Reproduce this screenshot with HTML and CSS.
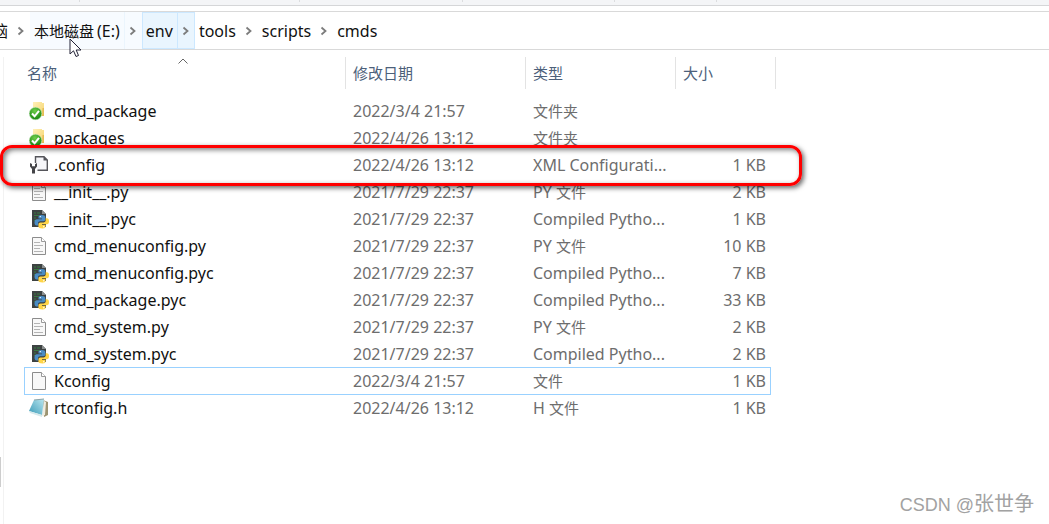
FILE: index.html
```html
<!DOCTYPE html>
<html lang="zh-CN">
<head>
    <meta charset="UTF-8">
    <meta name="viewport" content="width=device-width, initial-scale=1.0">
    <title>cmds</title>
    <link rel="stylesheet" href="styles.css">
</head>
<body>
    <svg class="sprite" aria-hidden="true">
        <defs>
            <linearGradient id="folder-fill" x1="0" y1="0" x2="1" y2="1">
                <stop offset="0" stop-color="#fff0b8"/>
                <stop offset="1" stop-color="#f5d36b"/>
            </linearGradient>
            <radialGradient id="check-fill" cx="0.45" cy="0.3" r="0.7">
                <stop offset="0" stop-color="#6fce4c"/>
                <stop offset="1" stop-color="#16850f"/>
            </radialGradient>
            <linearGradient id="note-fill" x1="0" y1="1" x2="1" y2="0">
                <stop offset="0" stop-color="#3b9bb8"/>
                <stop offset="1" stop-color="#b9e6ef"/>
            </linearGradient>
        </defs>
        <symbol id="chevron" viewBox="0 0 8 10">
            <path d="M1.5 1.5L5.5 5L1.5 8.5" fill="none" stroke="#7c7c7c" stroke-width="1.8"/>
        </symbol>
        <symbol id="folder" viewBox="0 0 20 20">
            <path d="M4 1h9v1h2v6l-1 1v6H4z" fill="url(#folder-fill)"/>
            <path d="M13.500 7H15v8h-2z" fill="#e5bd56"/>
            <circle cx="6.500" cy="12.500" r="6.300" fill="url(#check-fill)" stroke="#cfe8c8" stroke-width="0.5"/>
            <path d="M3 12.500l2.600 2.800L10 9.800" fill="none" stroke="#fff" stroke-width="2"/>
        </symbol>
        <symbol id="config" viewBox="0 0 20 20">
            <path d="M6.500 8V1.700h8.500L18.300 5v10.300H8.500" fill="#f5f5f8" stroke="#55555a" stroke-width="1.400"/>
            <path d="M14.500 1.500V5.500h4z" fill="#55555a"/>
            <path d="M1 8v3.500L3 14v4.500h3V14l2-2.500V8L6 9.200v2H3V9z" fill="#444448"/>
        </symbol>
        <symbol id="page" viewBox="0 0 20 20">
            <path d="M3.500 1.500h9l4 4v13h-13z" fill="#f8f8f8" stroke="#8c8c8c"/>
            <path d="M12.500 1.500v4h4" fill="#fff" stroke="#9a9a9a"/>
        </symbol>
        <symbol id="text" viewBox="0 0 20 20">
            <path d="M3.500 1.500h9l4 4v13h-13z" fill="#f8f8f8" stroke="#8c8c8c"/>
            <path d="M12.500 1.500v4h4" fill="#fff" stroke="#9a9a9a"/>
            <path d="M5 6.500h6M5 9.500h9M5 12.500h6M5 15.500h9" stroke="#b4b4b4"/>
        </symbol>
        <symbol id="python" viewBox="0 0 20 20">
            <path d="M3 1h10l4 4v13H3z" fill="#3d4242"/>
            <path d="M13 1v4h4z" fill="#8b8f8f"/>
            <path d="M5 4h2M8 4h3M5 6.500h5M5 9h2M5 11.500h1" stroke="#397a42"/>
            <path d="M12.500 6c-2.500 0-3 .8-3 2v1.500h3.500v.7H8c-1.500 0-2.500 1-2.500 3.200 0 2 .8 3 2.200 3h1.300v-2c0-1.300 1-2.200 2.300-2.200h3c1.200 0 2-.8 2-2V8c0-1.300-1-2-3.800-2z" fill="#4a8cc4"/>
            <path d="M13.500 19.500c2.500 0 3-.8 3-2V16H13v-.7h5c1.300 0 2-.8 2-3s-.8-3-2-3h-1.300v2c0 1.300-1 2.200-2.300 2.200h-3c-1.200 0-2 .8-2 2v2c0 1.300 1.300 2 4.100 2z" fill="#ffd548"/>
            <circle cx="11.300" cy="7.600" r="0.700" fill="#fff"/>
            <circle cx="14.800" cy="17.800" r="0.700" fill="#fff"/>
        </symbol>
        <symbol id="header-file" viewBox="0 0 20 20">
            <path d="M14 2l5 2v13l-4 2z" fill="#9c9371"/>
            <path d="M15 3l2 1-1 13-3 1z" fill="#efece0"/>
            <path d="M5 2l10-1-2 16L0 13z" fill="url(#note-fill)"/>
            <path d="M0 13l13 4v2L1 15z" fill="#d6e9ec"/>
            <path d="M5 2l10-1" stroke="#8ba3a8"/>
        </symbol>
    </svg>
    <div class="toolbar">
        <div class="group group-1"></div>
        <div class="group group-2"></div>
        <div class="group group-3"></div>
        <div class="group group-4"></div>
        <div class="group group-5"></div>
    </div>
    <nav class="address-bar" aria-label="地址">
        <div class="crumb crumb-cut">
            <a href="#">脑</a>
            <button type="button" aria-label="展开"><svg><use href="#chevron"/></svg></button>
        </div>
        <div class="crumb hovered">
            <a href="#"><span class="cjk">本地磁盘</span> (E:)</a>
            <button type="button" aria-label="展开"><svg><use href="#chevron"/></svg></button>
        </div>
        <div class="crumb active">
            <a href="#">env</a>
            <button type="button" aria-label="展开"><svg><use href="#chevron"/></svg></button>
        </div>
        <div class="crumb">
            <a href="#">tools</a>
            <button type="button" aria-label="展开"><svg><use href="#chevron"/></svg></button>
        </div>
        <div class="crumb">
            <a href="#">scripts</a>
            <button type="button" aria-label="展开"><svg><use href="#chevron"/></svg></button>
        </div>
        <div class="crumb">
            <a href="#">cmds</a>
        </div>
        <svg class="cursor" viewBox="0 0 14 20"><path d="M1 1v15l3.500-3.200L7 18.500l2.500-1L7.200 12H12z" fill="#fff" stroke="#222236"/></svg>
    </nav>
    <main class="content">
        <div class="nav-pane"></div>
        <div class="file-pane">
            <table class="file-list">
                <colgroup>
                    <col class="col-name">
                    <col class="col-date">
                    <col class="col-type">
                    <col class="col-size">
                </colgroup>
                <thead>
                    <tr>
                        <th><button type="button">名称</button><svg class="sort-icon" viewBox="0 0 10 6"><path d="M0.500 5.500L5 1l4.500 4.500" fill="none" stroke="#666"/></svg></th>
                        <th><button type="button">修改日期</button></th>
                        <th><button type="button">类型</button></th>
                        <th><button type="button">大小</button></th>
                    </tr>
                </thead>
                <tbody>
                    <tr>
                        <td class="name"><svg><use href="#folder"/></svg>cmd_package</td>
                        <td>2022/3/4 21:57</td>
                        <td><span class="cjk">文件夹</span></td>
                        <td class="size"></td>
                    </tr>
                    <tr>
                        <td class="name"><svg><use href="#folder"/></svg>packages</td>
                        <td>2022/4/26 13:12</td>
                        <td><span class="cjk">文件夹</span></td>
                        <td class="size"></td>
                    </tr>
                    <tr class="marked">
                        <td class="name"><svg><use href="#config"/></svg>.config</td>
                        <td>2022/4/26 13:12</td>
                        <td>XML Configurati...</td>
                        <td class="size">1 KB</td>
                    </tr>
                    <tr>
                        <td class="name"><svg><use href="#text"/></svg>__init__.py</td>
                        <td>2021/7/29 22:37</td>
                        <td>PY <span class="cjk">文件</span></td>
                        <td class="size">2 KB</td>
                    </tr>
                    <tr>
                        <td class="name"><svg><use href="#python"/></svg>__init__.pyc</td>
                        <td>2021/7/29 22:37</td>
                        <td>Compiled Pytho...</td>
                        <td class="size">1 KB</td>
                    </tr>
                    <tr>
                        <td class="name"><svg><use href="#text"/></svg>cmd_menuconfig.py</td>
                        <td>2021/7/29 22:37</td>
                        <td>PY <span class="cjk">文件</span></td>
                        <td class="size">10 KB</td>
                    </tr>
                    <tr>
                        <td class="name"><svg><use href="#python"/></svg>cmd_menuconfig.pyc</td>
                        <td>2021/7/29 22:37</td>
                        <td>Compiled Pytho...</td>
                        <td class="size">7 KB</td>
                    </tr>
                    <tr>
                        <td class="name"><svg><use href="#python"/></svg>cmd_package.pyc</td>
                        <td>2021/7/29 22:37</td>
                        <td>Compiled Pytho...</td>
                        <td class="size">33 KB</td>
                    </tr>
                    <tr>
                        <td class="name"><svg><use href="#text"/></svg>cmd_system.py</td>
                        <td>2021/7/29 22:37</td>
                        <td>PY <span class="cjk">文件</span></td>
                        <td class="size">2 KB</td>
                    </tr>
                    <tr>
                        <td class="name"><svg><use href="#python"/></svg>cmd_system.pyc</td>
                        <td>2021/7/29 22:37</td>
                        <td>Compiled Pytho...</td>
                        <td class="size">2 KB</td>
                    </tr>
                    <tr class="focused">
                        <td class="name"><svg><use href="#page"/></svg>Kconfig</td>
                        <td>2022/3/4 21:57</td>
                        <td><span class="cjk">文件</span></td>
                        <td class="size">1 KB</td>
                    </tr>
                    <tr>
                        <td class="name"><svg><use href="#header-file"/></svg>rtconfig.h</td>
                        <td>2022/4/26 13:12</td>
                        <td>H <span class="cjk">文件</span></td>
                        <td class="size">1 KB</td>
                    </tr>
                </tbody>
            </table>
        </div>
    </main>
    <div class="watermark">CSDN @<span class="watermark-name">张世争</span></div>
</body>
</html>
```

FILE: styles.css
```css
* {
    box-sizing: border-box;
}
body {
    margin: 0;
    min-height: 100vh;
    display: flex;
    flex-direction: column;
    position: relative;
    background-color: #FFFFFF;
    font-family: "Noto Sans", "Noto Sans CJK SC", sans-serif;
    font-size: 16px;
    line-height: 26px;
    color: #111111;
}
button {
    border: none;
    padding: 0;
    background: none;
    font: inherit;
    color: inherit;
}
.sprite {
    position: absolute;
    width: 0;
    height: 0;
}
.cjk {
    font-size: 15px;
}
.toolbar {
    display: flex;
    height: 6px;
    background-color: #F4F5F7;
    border-bottom: 1px solid #D5D6D8;
}
.group {
    height: 2px;
    border-right: 1px solid #DCDDDF;
}
.group-1 {
    width: 80px;
}
.group-2 {
    width: 220px;
}
.group-3 {
    width: 163px;
}
.group-4 {
    width: 152px;
}
.group-5 {
    width: 102px;
}
.address-bar {
    position: relative;
    display: flex;
    height: 39px;
    margin-top: 5px;
    border-top: 1px solid #D9D9D9;
    border-bottom: 1px solid #D9D9D9;
}
.crumb {
    display: flex;
}
.crumb a {
    display: flex;
    align-items: center;
    gap: 4px;
    padding: 0 4px;
    color: inherit;
    text-decoration: none;
    white-space: nowrap;
}
.crumb button {
    display: flex;
    align-items: center;
    justify-content: center;
    width: 18px;
}
.crumb button svg {
    width: 8px;
    height: 10px;
}
.crumb-cut {
    margin-left: -12px;
}
.crumb.hovered {
    background-color: #F7FBFF;
}
.crumb.hovered a {
    gap: 3px;
}
.crumb.hovered button {
    border-left: 1px solid #EBF5FD;
}
.crumb.active {
    background-color: #E9F5FE;
    box-shadow: inset 0 0 0 1px #CCE8FF;
}
.crumb.active button {
    border-left: 1px solid #CCE8FF;
}
/* mouse pointer lies over the address bar */
.cursor {
    position: absolute;
    left: 69px;
    top: 26px;
    width: 14px;
    height: 20px;
}
.content {
    flex: 1;
    display: flex;
    padding-top: 7px;
}
.nav-pane {
    width: 4px;
    border-right: 1px solid #F2F2F2;
    background: linear-gradient(#CDCDCD, #CDCDCD) left bottom 37px / 1px 30px no-repeat;
}
.file-pane {
    flex: 1;
    padding-left: 20px;
}
.file-list {
    border-spacing: 0;
    table-layout: fixed;
    width: 752px;
    max-width: 100%;
}
.col-name {
    width: 322px;
}
.col-date {
    width: 180px;
}
.col-type {
    width: 150px;
}
.col-size {
    width: 100px;
}
.file-list th {
    position: relative;
    height: 32px;
    padding: 0 7px;
    border-right: 1px solid #E3E3E3;
    text-align: left;
    font-size: 15px;
    font-weight: normal;
    color: #4C607A;
}
.file-list th:first-child {
    padding-left: 3px;
}
.sort-icon {
    position: absolute;
    top: 1px;
    left: 50%;
    width: 10px;
    height: 6px;
    margin-left: -7px;
}
.file-list tbody::before {
    content: "";
    display: block;
    height: 8px;
}
.file-list td {
    height: 27px;
    padding: 0 7px;
    color: #6D6D6D;
    white-space: nowrap;
}
.file-list td.name {
    padding-left: 5px;
    color: #111111;
}
.name svg {
    width: 20px;
    height: 20px;
    margin-right: 5px;
    vertical-align: -4px;
}
.file-list td.size {
    padding-right: 10px;
    text-align: right;
}
.marked,
.focused {
    position: relative;
}
.focused::after {
    content: "";
    position: absolute;
    top: 0;
    bottom: -1px;
    left: 0;
    right: 5px;
    border: 1px solid #99D1FF;
}
.marked::after {
    content: "";
    position: absolute;
    top: -6px;
    bottom: -8px;
    left: -24px;
    right: -26px;
    border: 3px solid #FF0000;
    border-radius: 12px;
    box-shadow: 2px 2px 5px rgba(0, 0, 0, 0.6), inset 2px 2px 5px rgba(0, 0, 0, 0.5);
}
.watermark {
    position: absolute;
    right: 15px;
    bottom: 6px;
    font-family: "Liberation Sans", "Noto Sans CJK SC", sans-serif;
    font-size: 18px;
    color: #A2A2A2;
}
.watermark-name {
    font-size: 20px;
}
```
